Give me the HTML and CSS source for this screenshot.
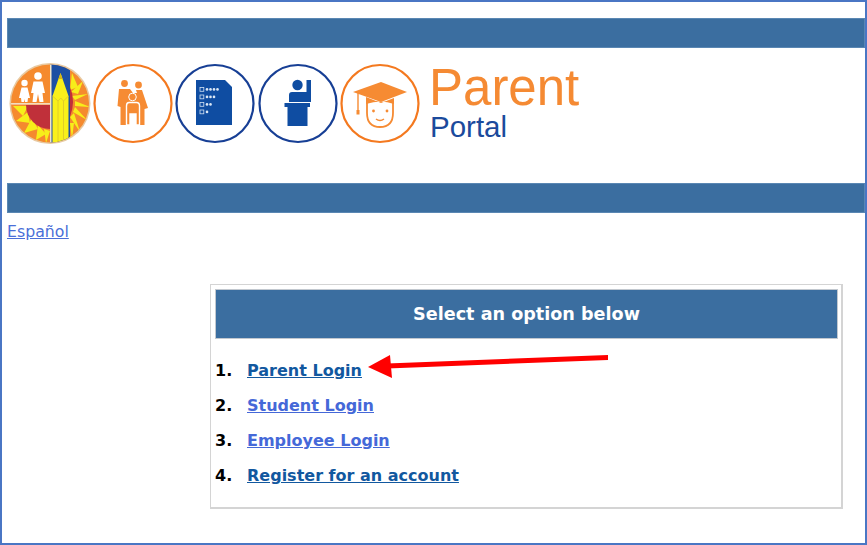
FILE: index.html
```html
<!DOCTYPE html>
<html lang="en">
<head>
<meta charset="utf-8">
<title>Parent Portal</title>
<link rel="stylesheet" href="styles.css">
</head>
<body>
<div class="frame">
  <div class="bar"></div>
  <div class="logo-row">
    <svg class="badge" viewBox="0 0 82 82" aria-hidden="true">
      <defs><clipPath id="sealClip"><circle cx="41" cy="40.5" r="39"/></clipPath></defs>
      <circle cx="41" cy="40.5" r="40.5" fill="#e8c9a0"/>
      <g clip-path="url(#sealClip)">
        <rect x="0" y="0" width="82" height="82" fill="#f58a2e"/>
        <g fill="#f7ee1a">
          <path d="M4 43 L19 43 L14 53 Z"/><path d="M7 58 L19 49 L21 60 Z"/><path d="M15 70 L23 55 L29 66 Z"/><path d="M27 77 L29 62 L37 71 Z"/><path d="M37 80 L35 66 L41 68 Z"/>
          <path d="M63 10 L69 24 L61 27 Z"/><path d="M74 18 L69 31 L62 29 Z"/><path d="M79 31 L66 37 L63 33 Z"/><path d="M81 44 L66 43 L66 38 Z"/><path d="M78 57 L64 49 L66 44 Z"/><path d="M71 69 L61 54 L65 50 Z"/><path d="M63 76 L61 60 L65 60 Z"/>
        </g>
        <path d="M17 42 H41 V66 A24 24 0 0 1 17 42 Z" fill="#c0303a"/>
        <path d="M61 24 Q67 38 61 54 Z" fill="#c0303a"/>
        <rect x="0" y="40" width="41" height="1.6" fill="#f3dcc0"/>
        <rect x="41" y="0" width="20" height="82" fill="#1d4fa3"/>
        <rect x="41" y="0" width="1.5" height="82" fill="#f3e6c8"/>
        <path d="M43.5 82 V33 L51.5 10 L59.5 33 V82 Z" fill="#f9f01a"/>
        <path d="M51.5 10 L49.5 16 H53.5 Z" fill="#d8b414"/>
        <path d="M49 38 V82 M54.5 38 V82" stroke="#dcc82a" stroke-width="0.9" fill="none"/>
        <path d="M43.5 33 L49 38 L51.8 35 L54.5 38 L59.5 33" stroke="#dcc82a" stroke-width="0.8" fill="none"/>
      </g>
      <g fill="#fff">
        <circle cx="15.5" cy="20" r="3.2"/><path d="M10 35 L12.5 24.5 H18.5 L21 35 H19 L18.5 39 H16 L15.5 36 L15 39 H12.5 L12 35 Z"/>
        <circle cx="29" cy="13" r="3.8"/><path d="M22 30 L24.5 18.5 H33.5 L36 30 H33.5 L34.5 39 H30.5 L29 31 L27.5 39 H23.5 L24.5 30 Z"/>
      </g>
    </svg>
    <svg class="badge" viewBox="0 0 82 82" aria-hidden="true">
      <circle cx="41" cy="40.5" r="38.5" fill="#fff" stroke="#f4791f" stroke-width="2.2"/>
      <g fill="#f68b33">
        <circle cx="32.5" cy="20.5" r="3.4"/>
        <circle cx="46.5" cy="22" r="3.4"/>
        <path d="M27 26 H38 L41 30 H45 L44 27 H50 L56 45 L52.5 46 V62 H46 V44 H36 V62 H28.5 V44 L25.5 43 Z"/>
      </g>
      <path d="M37 39.5 H44.5 Q47.5 39.5 47.5 43 V62 H44 V51 H38 V62 H34.5 V43 Q34.5 39.5 37 39.5 Z" fill="#f68b33" stroke="#fff" stroke-width="1.4"/>
      <circle cx="40.5" cy="34" r="3.8" fill="#f68b33" stroke="#fff" stroke-width="1"/>
    </svg>
    <svg class="badge" viewBox="0 0 82 82" aria-hidden="true">
      <circle cx="41" cy="40.5" r="38.5" fill="#fff" stroke="#173f95" stroke-width="2.2"/>
      <path d="M22 17 H51 L58 24 V62 H22 Z" fill="#0f4da2"/>
      <g fill="none" stroke="#cfe0f2" stroke-width="0.8">
        <rect x="26" y="24.5" width="3.8" height="3.8"/><rect x="26" y="32" width="3.8" height="3.8"/><rect x="26" y="39.5" width="3.8" height="3.8"/><rect x="26" y="47" width="3.8" height="3.8"/>
      </g>
      <g fill="#dbe7f5">
        <circle cx="33" cy="26.4" r="1.3"/><circle cx="36.5" cy="26.4" r="1.3"/><circle cx="40" cy="26.4" r="1.3"/><circle cx="43.5" cy="26.4" r="1.3"/>
        <circle cx="33" cy="33.9" r="1.3"/><circle cx="36.5" cy="33.9" r="1.3"/><circle cx="40" cy="33.9" r="1.3"/>
        <circle cx="33" cy="41.4" r="1.3"/><circle cx="36.5" cy="41.4" r="1.3"/>
        <circle cx="33" cy="48.9" r="1.3"/>
      </g>
    </svg>
    <svg class="badge" viewBox="0 0 82 82" aria-hidden="true">
      <circle cx="41" cy="40.5" r="38.5" fill="#fff" stroke="#173f95" stroke-width="2.2"/>
      <g fill="#0f4da2">
        <circle cx="40.5" cy="22" r="5.2"/>
        <path d="M49.5 17 H54 V39 H32 V32 Q32 29 35 29 H49.5 Z"/>
        <rect x="27.5" y="40" width="25.5" height="4"/>
        <rect x="30.5" y="44" width="20" height="19"/>
      </g>
    </svg>
    <svg class="badge" viewBox="0 0 82 82" aria-hidden="true">
      <circle cx="41" cy="40.5" r="38.5" fill="#fff" stroke="#f4791f" stroke-width="2.2"/>
      <path d="M28 36 V50 Q28 64 41 64 Q54 64 54 50 V36" fill="#fff" stroke="#f68b33" stroke-width="1.8"/>
      <path d="M14 29 L42 19 L68 29 L42 39 Z" fill="#f68b33"/>
      <path d="M27 34 L42 40 L55 35 V41 Q42 36 27 41 Z" fill="#f68b33"/>
      <path d="M19 30 V49" stroke="#f68b33" stroke-width="1.4"/>
      <rect x="17.5" y="47" width="3" height="4.5" fill="#f68b33"/>
      <circle cx="34.5" cy="48" r="1.4" fill="#f68b33"/><circle cx="48" cy="48" r="1.4" fill="#f68b33"/>
      <path d="M37 56 Q41 59 45 56" fill="none" stroke="#f68b33" stroke-width="1.5"/>
    </svg>
    <div class="brand">
      <div class="brand-main">Parent</div>
      <div class="brand-sub">Portal</div>
    </div>
  </div>
  <div class="bar"></div>
  <a class="lang" href="#">Español</a>
  <section class="card">
    <h1 class="card-title">Select an option below</h1>
    <ol class="options">
      <li><a class="link-dark" href="#">Parent Login</a></li>
      <li><a class="link-light" href="#">Student Login</a></li>
      <li><a class="link-light" href="#">Employee Login</a></li>
      <li><a class="link-dark" href="#">Register for an account</a></li>
    </ol>
    <svg class="arrow" viewBox="0 0 245 26" aria-hidden="true">
      <path d="M241 1 L20 9.5 L20 14.5 L241 6 Z" fill="#f00"/>
      <path d="M1 13 L23 1 L25 24 Z" fill="#f00"/>
    </svg>
  </section>
</div>
</body>
</html>
```
FILE: styles.css
```css
* { box-sizing: border-box; }
html, body { margin: 0; padding: 0; background: #fff; }
body { width: 867px; height: 545px; overflow: hidden; font-family: "DejaVu Sans", Verdana, sans-serif; }
.frame {
  width: 867px;
  height: 545px;
  border: 2px solid #4a76c4;
  padding: 16px 0 0 5px;
}
.bar {
  height: 30px;
  background: #3b6ea0;
  box-shadow: inset 0 0 0 1px #5a87b3;
}
.logo-row {
  height: 135px;
  display: flex;
  align-items: flex-start;
  gap: 0.5px;
  padding: 15px 0 0 2px;
}
.badge { width: 82px; height: 82px; flex: none; display: block; }
.brand {
  margin-left: 7.5px;
  margin-top: 5px;
  font-family: "Liberation Sans", Arial, sans-serif;
}
.brand-main { font-size: 51px; line-height: 40px; color: #f58a33; }
.brand-sub { font-size: 29.5px; line-height: 24px; color: #1b4a9c; margin: 7px 0 0 1px; }
.lang {
  display: block;
  width: max-content;
  margin-top: 10px;
  font-size: 15.75px;
  line-height: 18px;
  color: #4a6fd8;
}
.card {
  position: relative;
  width: 633px;
  height: 225px;
  margin: 43px 0 0 203px;
  padding: 4px 3px 0 4px;
  border: 2px solid #d4d4d4;
  border-width: 1px 2px 2px 1px;
}
.card-title {
  margin: 0;
  height: 50px;
  border: 1px solid #c2c8cf;
  background: #3b6ea0;
  color: #fff;
  font-size: 17.6px;
  line-height: 49px;
  font-weight: 700;
  text-align: center;
}
.options {
  list-style: none;
  counter-reset: opt;
  margin: 14px 0 0;
  padding: 0;
  font-size: 16px;
  font-weight: 700;
}
.options li {
  counter-increment: opt;
  display: flex;
  height: 35px;
  line-height: 35px;
}
.options li::before {
  content: counter(opt) ".";
  width: 32px;
  flex: none;
  color: #000;
}
.link-dark { color: #12589f; }
.link-light { color: #4568d8; }
.arrow {
  position: absolute;
  left: 156px;
  top: 69px;
  width: 245px;
  height: 26px;
}
```
